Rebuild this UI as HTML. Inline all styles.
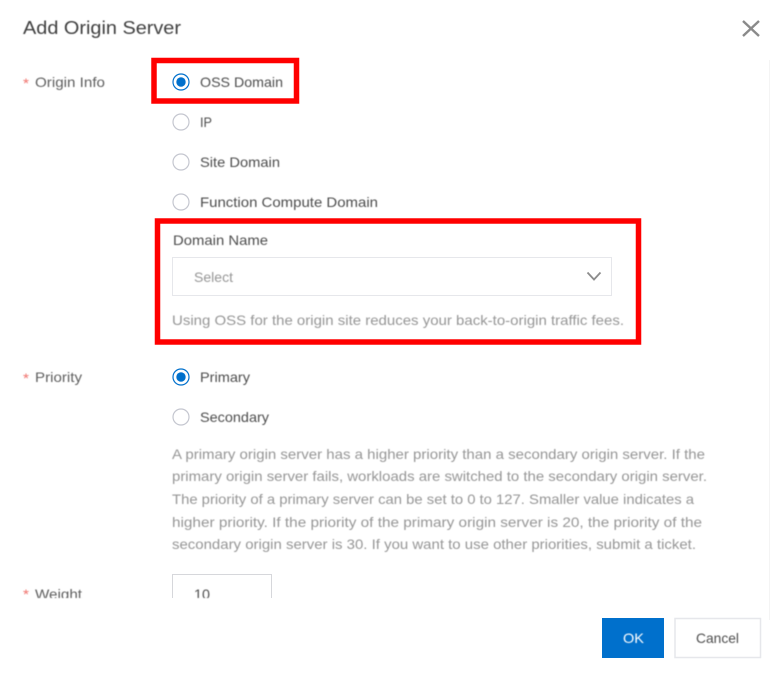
<!DOCTYPE html>
<html><head><meta charset="utf-8"><title>Add Origin Server</title>
<style>
html,body{margin:0;padding:0;background:#fff;width:770px;height:678px;overflow:hidden}
svg{display:block;position:absolute;left:0;top:0}
text{font-family:"Liberation Sans",sans-serif;font-size:14px;fill:#5e5e5e}
.h{fill:#969696}
.d{fill:#4e4e4e}
.s{fill:#f0706a}
</style></head><body>
<svg width="770" height="678" viewBox="0 0 770 678" xmlns="http://www.w3.org/2000/svg">
<defs><filter id="b" filterUnits="userSpaceOnUse" x="0" y="0" width="770" height="678"><feGaussianBlur stdDeviation="0.4"/></filter>
<clipPath id="c"><rect x="0" y="0" width="770" height="598"/></clipPath></defs>
<rect x="769" y="60" width="1" height="560" fill="#f4f4f4"/>
<path d="M743 21L759 36M759 21L743 36" stroke="#8a8a8a" stroke-width="2.4" fill="none"/>
<rect x="154" y="60.5" width="142.5" height="40.5" fill="none" stroke="#f00" stroke-width="5.5"/>
<rect x="157.5" y="221" width="481" height="121" fill="none" stroke="#f00" stroke-width="5.5"/>
<rect x="172.5" y="257.5" width="439" height="38" fill="#fff" stroke="#e6e7eb" stroke-width="1"/>
<path d="M587.5 272.5L594 279.5L600.5 272.5" stroke="#8c8c8c" stroke-width="1.8" fill="none"/>
<circle cx="181" cy="82" r="8" fill="#fff" stroke="#0070cc" stroke-width="1.2"/>
<circle cx="181" cy="82" r="4.7" fill="#0070cc"/>
<circle cx="181" cy="122" r="8" fill="#fff" stroke="#c4c6cf" stroke-width="1.2"/>
<circle cx="181" cy="162" r="8" fill="#fff" stroke="#c4c6cf" stroke-width="1.2"/>
<circle cx="181" cy="202" r="8" fill="#fff" stroke="#c4c6cf" stroke-width="1.2"/>
<circle cx="181" cy="377" r="8" fill="#fff" stroke="#0070cc" stroke-width="1.2"/>
<circle cx="181" cy="377" r="4.7" fill="#0070cc"/>
<circle cx="181" cy="417" r="8" fill="#fff" stroke="#c4c6cf" stroke-width="1.2"/>
<path d="M172.5 598V574.5H271.5V598" fill="none" stroke="#d6d7db" stroke-width="1"/>
<rect x="602" y="618" width="62" height="40" fill="#0070cc"/>
<rect x="675" y="618.5" width="85.5" height="39" fill="#fff" stroke="#e6e7eb" stroke-width="1.5"/>
<g filter="url(#b)">
<text x="23" y="34" textLength="158" lengthAdjust="spacingAndGlyphs" style="font-size:18.5px;fill:#404040">Add Origin Server</text>
<text class="s" x="23" y="88" textLength="6" lengthAdjust="spacingAndGlyphs">*</text>
<text x="35" y="87" textLength="70" lengthAdjust="spacingAndGlyphs">Origin Info</text>
<text class="d" x="200" y="87" textLength="83" lengthAdjust="spacingAndGlyphs">OSS Domain</text>
<text class="d" x="200" y="127" textLength="12" lengthAdjust="spacingAndGlyphs">IP</text>
<text class="d" x="200" y="167" textLength="80" lengthAdjust="spacingAndGlyphs">Site Domain</text>
<text class="d" x="200" y="207" textLength="178" lengthAdjust="spacingAndGlyphs">Function Compute Domain</text>
<text class="d" x="173" y="245" textLength="95" lengthAdjust="spacingAndGlyphs">Domain Name</text>
<text class="h" x="194" y="282" textLength="39" lengthAdjust="spacingAndGlyphs">Select</text>
<text class="h" x="172" y="325" textLength="452" lengthAdjust="spacingAndGlyphs">Using OSS for the origin site reduces your back-to-origin traffic fees.</text>
<text class="s" x="23" y="383" textLength="6" lengthAdjust="spacingAndGlyphs">*</text>
<text x="35" y="382" textLength="47" lengthAdjust="spacingAndGlyphs">Priority</text>
<text class="d" x="200" y="382" textLength="50" lengthAdjust="spacingAndGlyphs">Primary</text>
<text class="d" x="200" y="422" textLength="69" lengthAdjust="spacingAndGlyphs">Secondary</text>
<text class="h" x="172" y="459" textLength="533" lengthAdjust="spacingAndGlyphs">A primary origin server has a higher priority than a secondary origin server. If the</text>
<text class="h" x="172" y="481" textLength="535" lengthAdjust="spacingAndGlyphs">primary origin server fails, workloads are switched to the secondary origin server.</text>
<text class="h" x="172" y="504" textLength="522" lengthAdjust="spacingAndGlyphs">The priority of a primary server can be set to 0 to 127. Smaller value indicates a</text>
<text class="h" x="172" y="527" textLength="530" lengthAdjust="spacingAndGlyphs">higher priority. If the priority of the primary origin server is 20, the priority of the</text>
<text class="h" x="172" y="549" textLength="524" lengthAdjust="spacingAndGlyphs">secondary origin server is 30. If you want to use other priorities, submit a ticket.</text>
<g clip-path="url(#c)">
<text class="s" x="23" y="599" textLength="6" lengthAdjust="spacingAndGlyphs">*</text>
<text x="35" y="599" textLength="47" lengthAdjust="spacingAndGlyphs">Weight</text>
<text class="d" x="194" y="599" textLength="16" lengthAdjust="spacingAndGlyphs">10</text>
</g>
<text x="623" y="643" textLength="21" lengthAdjust="spacingAndGlyphs" style="fill:#fff">OK</text>
<text x="696" y="643" textLength="43" lengthAdjust="spacingAndGlyphs" style="fill:#4e4e4e">Cancel</text>
</g>
</svg>
</body></html>
